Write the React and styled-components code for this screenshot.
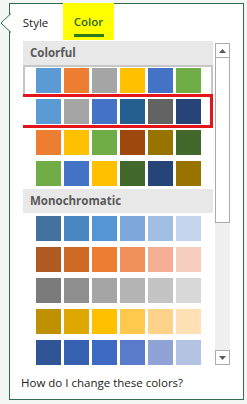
import styled, { createGlobalStyle } from 'styled-components';

const GlobalStyle = createGlobalStyle`
  body {
    margin: 0;
    background: #f2f7f3;
    font-family: 'Open Sans', 'Liberation Sans', sans-serif;
  }
`;

const Panel = styled.div`
  background: #fff;
  border: 1px solid #2f6f4f;
  box-sizing: border-box;
  display: flex;
  flex-direction: column;
  height: 397px;
  margin: 3px 0 0 9px;
  position: relative;
  width: 235px;
`;

const Pointer = styled.svg`
  left: -10px;
  position: absolute;
  top: 9px;
`;

const Tabs = styled.div`
  display: flex;
  gap: 5px;
  height: 37px;
  padding-left: 3px;
`;

const Tab = styled.div`
  align-items: center;
  background: ${(props) => (props.$active ? '#ffff00' : 'transparent')};
  box-sizing: border-box;
  color: ${(props) => (props.$active ? '#2d6a1e' : '#222')};
  display: flex;
  font-size: 11.5px;
  font-weight: ${(props) => (props.$active ? 600 : 400)};
  height: 37px;
  justify-content: center;
  margin-top: ${(props) => (props.$active ? '-1px' : '0')};
  position: relative;
  width: ${(props) => props.$width}px;
`;

const Underline = styled.div`
  background: #2d7a1e;
  bottom: 3px;
  height: 3px;
  left: 11px;
  position: absolute;
  right: 10px;
`;

const Body = styled.div`
  display: flex;
  gap: 2px;
  padding-left: 13px;
`;

const Gallery = styled.div`
  height: 327px;
  overflow: hidden;
  position: relative;
  width: 190px;
`;

const Group = styled.div`
  background: #e8e8e8;
  box-sizing: border-box;
  color: #595959;
  font-size: 11.5px;
  font-weight: 700;
  height: 24px;
  line-height: 24px;
  padding-left: 7px;
`;

const Row = styled.div`
  box-shadow: ${(props) => (props.$hover ? 'inset 0 0 0 2px #c6c6c6' : 'none')};
  display: flex;
  gap: 3px;
  padding: 3px 12px 3px 13px;
`;

const Swatch = styled.div`
  background: ${(props) => props.$color};
  height: 25px;
  width: 25px;
`;

const Marker = styled.div`
  border: 3px solid #e3141c;
  box-sizing: border-box;
  height: 34px;
  left: -10px;
  position: absolute;
  top: 53px;
  width: 200px;
`;

const Scrollbar = styled.div`
  background: #f0f0f0;
  display: flex;
  flex-direction: column;
  height: 322px;
  margin-top: 2px;
  width: 15px;
`;

const ScrollButton = styled.div`
  align-items: center;
  background: #fff;
  border: 1px solid #ababab;
  box-sizing: border-box;
  display: flex;
  height: 15px;
  justify-content: center;
  margin-top: ${(props) => (props.$bottom ? 'auto' : '0')};
`;

const Thumb = styled.div`
  background: #fff;
  border: 1px solid #ababab;
  border-top: none;
  box-sizing: border-box;
  height: 165px;
`;

const Footer = styled.div`
  color: #222;
  font-size: 11.5px;
  line-height: 16px;
  padding: 7px 0 0 11px;
`;

const colorful = [
  ['#5b9bd5', '#ed7d31', '#a5a5a5', '#ffc000', '#4472c4', '#70ad47'],
  ['#5b9bd5', '#a5a5a5', '#4472c4', '#255e91', '#636363', '#264478'],
  ['#ed7d31', '#ffc000', '#70ad47', '#9e480e', '#997300', '#43682b'],
  ['#70ad47', '#4472c4', '#ffc000', '#43682b', '#264478', '#997300'],
];

const mono = [
  ['#41719c', '#4a86c2', '#5695d4', '#7ea8db', '#a2bfe3', '#c3d4ec'],
  ['#ae5a21', '#cf6a26', '#ed7d31', '#f0915d', '#f3ae94', '#f6cdbf'],
  ['#7b7b7b', '#8f8f8f', '#a5a5a5', '#b4b4b4', '#c4c4c4', '#d8d8d8'],
  ['#bf9000', '#dfa800', '#ffc000', '#ffc94d', '#ffd28b', '#ffe1b5'],
  ['#2f5597', '#3660b0', '#3e6ac4', '#5a7bcc', '#8fa3d7', '#b4c2e3'],
];

const Arrow = ({ down }) => (
  <svg width="7" height="4" viewBox="0 0 7 4">
    <path d={down ? 'M0 0H7L3.5 4Z' : 'M0 4H7L3.5 0Z'} fill="#5a5a5a" />
  </svg>
);

const App = () => {
  return (
    <>
      <GlobalStyle />
      <Panel>
        <Pointer width="11" height="20" viewBox="0 0 11 20">
          <path d="M11 0.5L1 10L11 19.5" fill="#fff" stroke="#2f6f4f" strokeWidth="1" />
        </Pointer>
        <Tabs>
          <Tab $width={45}>Style</Tab>
          <Tab $active $width={51}>
            Color
            <Underline />
          </Tab>
        </Tabs>
        <Body>
          <Gallery>
            <Group>Colorful</Group>
            {colorful.map((row, i) => (
              <Row key={i} $hover={i === 0}>
                {row.map((c, j) => (
                  <Swatch key={j} $color={c} />
                ))}
              </Row>
            ))}
            <Group>Monochromatic</Group>
            {mono.map((row, i) => (
              <Row key={i}>
                {row.map((c, j) => (
                  <Swatch key={j} $color={c} />
                ))}
              </Row>
            ))}
            <Marker />
          </Gallery>
          <Scrollbar>
            <ScrollButton>
              <Arrow />
            </ScrollButton>
            <Thumb />
            <ScrollButton $bottom>
              <Arrow down />
            </ScrollButton>
          </Scrollbar>
        </Body>
        <Footer>How do I change these colors?</Footer>
      </Panel>
    </>
  );
};

export default App;
